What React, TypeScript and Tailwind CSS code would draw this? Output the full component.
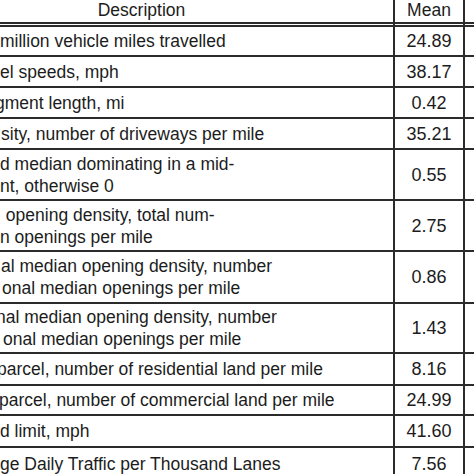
import React from "react";

type Row = {
  lines: { text: string; shift: number }[];
  mean: string;
  h: number;
};

export default function App() {
  const rows: Row[] = [
    { lines: [{ text: "million vehicle miles travelled", shift: 0 }], mean: "24.89", h: 30 },
    { lines: [{ text: "el speeds, mph", shift: 0 }], mean: "38.17", h: 31 },
    { lines: [{ text: "gment length, mi", shift: -5 }], mean: "0.42", h: 31 },
    { lines: [{ text: "sity, number of driveways per mile", shift: 1 }], mean: "35.21", h: 31 },
    {
      lines: [
        { text: "d median dominating in a mid-", shift: 0 },
        { text: "nt, otherwise 0", shift: 0 },
      ],
      mean: "0.55",
      h: 51,
    },
    {
      lines: [
        { text: " opening density, total num-", shift: 1 },
        { text: "n openings per mile", shift: 0 },
      ],
      mean: "2.75",
      h: 51,
    },
    {
      lines: [
        { text: "al median opening density, number", shift: 1 },
        { text: "onal median openings per mile", shift: 2 },
      ],
      mean: "0.86",
      h: 52,
    },
    {
      lines: [
        { text: "nal median opening density, number", shift: -4 },
        { text: "onal median openings per mile", shift: 3 },
      ],
      mean: "1.43",
      h: 50,
    },
    { lines: [{ text: "parcel, number of residential land per mile", shift: -3 }], mean: "8.16", h: 32 },
    { lines: [{ text: "parcel, number of commercial land per mile", shift: -1 }], mean: "24.99", h: 30 },
    { lines: [{ text: "d limit, mph", shift: 0 }], mean: "41.60", h: 32 },
    { lines: [{ text: "ge Daily Traffic per Thousand Lanes", shift: 0 }], mean: "7.56", h: 34 },
  ];

  return (
    <div className="w-[474px] h-[474px] overflow-hidden bg-white text-[#1c1c1c] font-['Liberation_Sans',Arial,sans-serif]">
      {/* header */}
      <div className="grid grid-cols-[395px_70px_1fr] h-[22px]">
        <div className="border-r-2 border-[#2b2b2b] flex items-center justify-center pr-[110px] text-[17.5px] leading-none">
          Description
        </div>
        <div className="border-r-2 border-[#2b2b2b] flex items-center justify-center text-[17.5px] leading-none">
          Mean
        </div>
        <div />
      </div>
      <div className="grid grid-cols-[395px_70px_1fr] h-[5px]">
        <div className="border-y-2 border-r-2 border-[#2b2b2b]" />
        <div className="border-y-2 border-r-2 border-[#2b2b2b]" />
        <div className="border-y-2 border-[#2b2b2b]" />
      </div>

      {rows.map((row, i) => (
        <div
          key={i}
          className="grid grid-cols-[395px_70px_1fr] border-b-2 border-[#2b2b2b]"
          style={{ height: row.h }}
        >
          <div className="border-r-2 border-[#2b2b2b] flex flex-col justify-center overflow-hidden text-[17.5px] leading-[22px] whitespace-pre">
            {row.lines.map((l, j) => (
              <span key={j} style={{ marginLeft: l.shift }}>
                {l.text}
              </span>
            ))}
          </div>
          <div className="border-r-2 border-[#2b2b2b] flex items-center justify-center text-[18px] leading-none">
            {row.mean}
          </div>
          <div />
        </div>
      ))}
    </div>
  );
}
